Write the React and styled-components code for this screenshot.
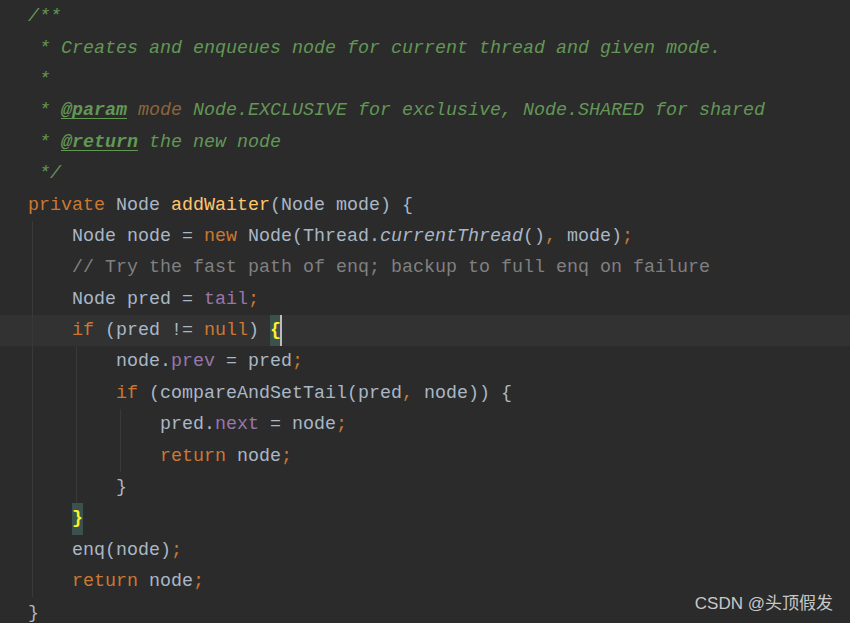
import React from "react";
import styled, { createGlobalStyle, css } from "styled-components";

const Global = createGlobalStyle`
  html, body { margin: 0; padding: 0; background: #2b2b2b; }
  body { width: 850px; height: 623px; overflow: hidden; }
`;

const Editor = styled.div`
  position: relative;
  width: 850px;
  height: 623px;
  background: #2b2b2b;
  box-sizing: border-box;
  padding-top: 1px;
  font-family: "Liberation Mono", "DejaVu Sans Mono", monospace;
  font-size: 18.33px;
  overflow: hidden;
`;

const Line = styled.div`
  display: flex;
  align-items: center;
  height: 31.4px;
  padding-left: 28px;
  white-space: pre;
  color: #a9b7c6;
  background: ${(p) => (p.$current ? "#323232" : "transparent")};
`;

const Indent = styled.span`
  display: inline-block;
  width: 44px;
  height: 100%;
  flex: none;
  background: linear-gradient(
    to right,
    transparent 4px,
    #393939 4px,
    #393939 5px,
    transparent 5px
  );
`;

const colors = {
  kw: "#cc7832",
  id: "#a9b7c6",
  fn: "#ffc66d",
  cm: "#808080",
  doc: "#629755",
  docp: "#8a653b",
  fld: "#9876aa",
  pn: "#cc7832",
};

const Tok = styled.span`
  color: ${(p) => colors[p.$t] || "#a9b7c6"};
  ${(p) => (p.$t === "doc" || p.$t === "docp" || p.$i) && css`font-style: italic;`}
  ${(p) =>
    p.$tag &&
    css`
      font-weight: bold;
      text-decoration: underline;
      text-underline-offset: 3px;
    `}
`;

const Brace = styled.span`
  display: inline-flex;
  align-items: center;
  height: 100%;
  background: #3b514d;
  color: #ffef28;
  font-weight: bold;
`;

const Caret = styled.span`
  display: inline-block;
  width: 2px;
  height: 100%;
  background: #bbbbbb;
  margin-left: -1px;
`;

const Watermark = styled.div`
  position: absolute;
  right: 17px;
  bottom: 9px;
  font-family: "Liberation Sans", "Noto Sans CJK SC", sans-serif;
  font-size: 17px;
  color: #c8c8c8;
`;

const lines = [
  { i: 0, t: [["doc", "/**"]] },
  { i: 0, t: [["doc", " * Creates and enqueues node for current thread and given mode."]] },
  { i: 0, t: [["doc", " *"]] },
  {
    i: 0,
    t: [
      ["doc", " * "],
      ["doc", "@param", { tag: true }],
      ["doc", " "],
      ["docp", "mode"],
      ["doc", " Node.EXCLUSIVE for exclusive, Node.SHARED for shared"],
    ],
  },
  {
    i: 0,
    t: [
      ["doc", " * "],
      ["doc", "@return", { tag: true }],
      ["doc", " the new node"],
    ],
  },
  { i: 0, t: [["doc", " */"]] },
  {
    i: 0,
    t: [
      ["kw", "private "],
      ["id", "Node "],
      ["fn", "addWaiter"],
      ["id", "(Node mode) {"],
    ],
  },
  {
    i: 1,
    t: [
      ["id", "Node node = "],
      ["kw", "new "],
      ["id", "Node(Thread."],
      ["id", "currentThread", { it: true }],
      ["id", "()"],
      ["pn", ", "],
      ["id", "mode)"],
      ["pn", ";"],
    ],
  },
  { i: 1, t: [["cm", "// Try the fast path of enq; backup to full enq on failure"]] },
  {
    i: 1,
    t: [
      ["id", "Node pred = "],
      ["fld", "tail"],
      ["pn", ";"],
    ],
  },
  {
    i: 1,
    current: true,
    t: [
      ["kw", "if "],
      ["id", "(pred != "],
      ["kw", "null"],
      ["id", ") "],
      ["brace", "{"],
      ["caret", ""],
    ],
  },
  {
    i: 2,
    t: [
      ["id", "node."],
      ["fld", "prev"],
      ["id", " = pred"],
      ["pn", ";"],
    ],
  },
  {
    i: 2,
    t: [
      ["kw", "if "],
      ["id", "(compareAndSetTail(pred"],
      ["pn", ", "],
      ["id", "node)) {"],
    ],
  },
  {
    i: 3,
    t: [
      ["id", "pred."],
      ["fld", "next"],
      ["id", " = node"],
      ["pn", ";"],
    ],
  },
  {
    i: 3,
    t: [
      ["kw", "return "],
      ["id", "node"],
      ["pn", ";"],
    ],
  },
  { i: 2, t: [["id", "}"]] },
  { i: 1, t: [["brace", "}"]] },
  {
    i: 1,
    t: [
      ["id", "enq(node)"],
      ["pn", ";"],
    ],
  },
  {
    i: 1,
    t: [
      ["kw", "return "],
      ["id", "node"],
      ["pn", ";"],
    ],
  },
  { i: 0, t: [["id", "}"]] },
];

export default function App() {
  return (
    <>
      <Global />
      <Editor>
        {lines.map((ln, idx) => (
          <Line key={idx} $current={ln.current}>
            {Array.from({ length: ln.i }).map((_, k) => (
              <Indent key={k} />
            ))}
            {ln.t.map(([type, text, opt], k) => {
              if (type === "brace") return <Brace key={k}>{text}</Brace>;
              if (type === "caret") return <Caret key={k} />;
              return (
                <Tok key={k} $t={type} $tag={opt && opt.tag} $i={opt && opt.it}>
                  {text}
                </Tok>
              );
            })}
          </Line>
        ))}
        <Watermark>CSDN @头顶假发</Watermark>
      </Editor>
    </>
  );
}
